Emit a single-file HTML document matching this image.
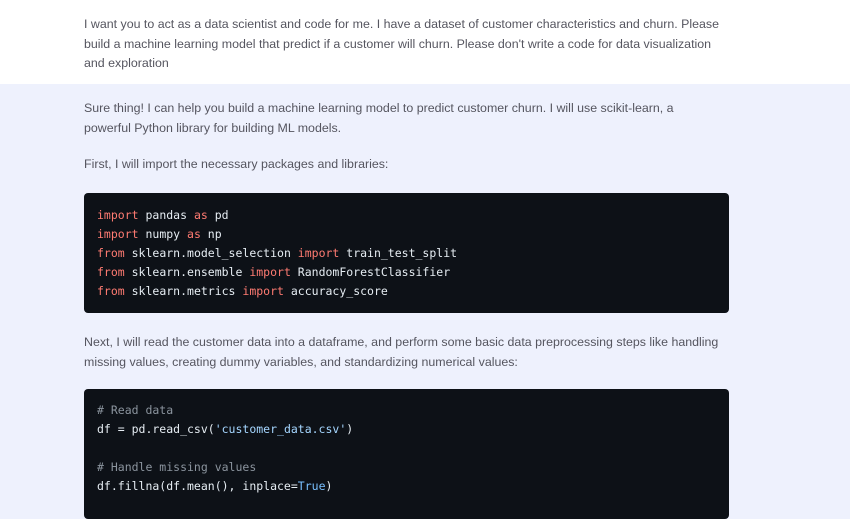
<!DOCTYPE html>
<html><head><meta charset="utf-8"><style>
*{margin:0;padding:0;box-sizing:border-box}
body{width:850px;height:505px;overflow:hidden;background:#eef1fd;font-family:"Liberation Sans",sans-serif;color:#55555f;font-size:12.4px}
.top{position:absolute;left:0;top:0;width:850px;height:84px;background:#fff}
.t{position:absolute;left:84px;width:650px;line-height:19.5px;white-space:nowrap}
.code{position:absolute;left:84px;width:645px;background:#0d1117;border-radius:4px;font-family:"DejaVu Sans Mono","Liberation Mono",monospace;font-size:11.5px;color:#e6edf3;padding:0 13px;line-height:19px;white-space:pre}
.k{color:#ff7b72}.c{color:#8b949e}.s{color:#a5d6ff}.b{color:#79c0ff}
</style></head><body>
<div class="top"></div>
<div class="t" style="top:15px">I want you to act as a data scientist and code for me. I have a dataset of customer characteristics and churn. Please<br>build a machine learning model that predict if a customer will churn. Please don't write a code for data visualization<br>and exploration</div>
<div class="t" style="top:99px">Sure thing! I can help you build a machine learning model to predict customer churn. I will use scikit-learn, a<br>powerful Python library for building ML models.</div>
<div class="t" style="top:155px">First, I will import the necessary packages and libraries:</div>
<div class="code" style="top:193px;height:120px;padding-top:13px"><span class="k">import</span> pandas <span class="k">as</span> pd
<span class="k">import</span> numpy <span class="k">as</span> np
<span class="k">from</span> sklearn.model_selection <span class="k">import</span> train_test_split
<span class="k">from</span> sklearn.ensemble <span class="k">import</span> RandomForestClassifier
<span class="k">from</span> sklearn.metrics <span class="k">import</span> accuracy_score</div>
<div class="t" style="top:333px">Next, I will read the customer data into a dataframe, and perform some basic data preprocessing steps like handling<br>missing values, creating dummy variables, and standardizing numerical values:</div>
<div class="code" style="top:389px;height:130px;padding-top:12px"><span class="c"># Read data</span>
df = pd.read_csv(<span class="s">'customer_data.csv'</span>)

<span class="c"># Handle missing values</span>
df.fillna(df.mean(), inplace=<span class="b">True</span>)</div>
</body></html>
